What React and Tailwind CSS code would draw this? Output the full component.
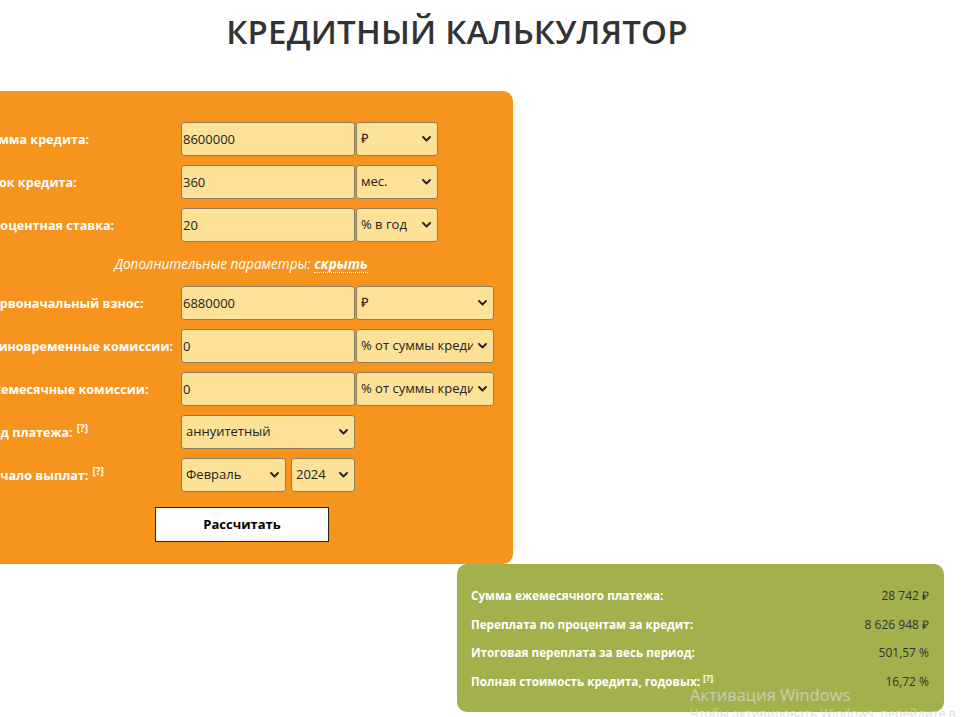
import React from 'react';

const Chevron = () => (
  <svg className="pointer-events-none absolute right-[7px] top-1/2 -translate-y-1/2" width="9" height="6" viewBox="0 0 9 6" fill="none">
    <path d="M1 1l3.5 3.5L8 1" stroke="#222" strokeWidth="1.8" strokeLinecap="round" strokeLinejoin="round" />
  </svg>
);

const Select = ({ value, options, width }) => (
  <div className={`relative h-[34px] ${width}`}>
    <select
      defaultValue={value}
      className="h-full w-full appearance-none rounded-[3px] border border-[#8d7f5e] bg-[#fde197] pl-[4px] pr-[20px] text-[13px] text-[#222] outline-none"
    >
      {options.map((o) => (
        <option key={o}>{o}</option>
      ))}
    </select>
    <Chevron />
  </div>
);

const Input = ({ value }) => (
  <input
    defaultValue={value}
    className="h-[34px] w-[174px] rounded-[3px] border border-[#8d7f5e] bg-[#fde197] px-[1px] text-[13px] text-[#222] outline-none"
  />
);

const Hint = () => <sup className="ml-[4px] text-[10px] font-bold">[?]</sup>;

const Row = ({ label, children }) => (
  <div className="flex h-[34px] items-center">
    <div className="w-[198px] whitespace-nowrap pt-[2px] text-[12.6px] font-bold text-white">{label}</div>
    <div className="flex gap-[1px]">{children}</div>
  </div>
);

const results = [
  ['Сумма ежемесячного платежа:', '28 742 ₽', false],
  ['Переплата по процентам за кредит:', '8 626 948 ₽', false],
  ['Итоговая переплата за весь период:', '501,57 %', false],
  ['Полная стоимость кредита, годовых:', '16,72 %', true],
];

export default function App() {
  return (
    <div className="relative h-[717px] w-[975px] overflow-hidden bg-white font-['Open_Sans',sans-serif]">
      <h1 className="flex h-[91px] w-[914px] items-center justify-center pb-[27px] text-[33px] font-semibold tracking-[0.2px] text-[#333]">
        КРЕДИТНЫЙ КАЛЬКУЛЯТОР
      </h1>

      <div className="ml-[-37px] flex w-[550px] flex-col gap-[9px] rounded-[10px] bg-[#f7941d] pb-[22px] pl-[20px] pt-[31px]">
        <Row label="Сумма кредита:">
          <Input value="8600000" />
          <Select value="₽" options={['₽', '$', '€']} width="w-[82px]" />
        </Row>
        <Row label="Срок кредита:">
          <Input value="360" />
          <Select value="мес." options={['мес.', 'лет']} width="w-[82px]" />
        </Row>
        <Row label="Процентная ставка:">
          <Input value="20" />
          <Select value="% в год" options={['% в год', '% в месяц']} width="w-[82px]" />
        </Row>

        <div className="flex h-[26px] w-[516px] items-center justify-center text-[13.6px] italic text-white">
          Дополнительные параметры:&nbsp;
          <span className="border-b border-dotted border-white font-bold leading-[16px]">скрыть</span>
        </div>

        <Row label="Первоначальный взнос:">
          <Input value="6880000" />
          <Select value="₽" options={['₽', '% от суммы кредита']} width="w-[138px]" />
        </Row>
        <Row label="Единовременные комиссии:">
          <Input value="0" />
          <Select value="% от суммы кредита" options={['% от суммы кредита', '₽']} width="w-[138px]" />
        </Row>
        <Row label="Ежемесячные комиссии:">
          <Input value="0" />
          <Select value="% от суммы кредита" options={['% от суммы кредита', '₽']} width="w-[138px]" />
        </Row>
        <Row
          label={
            <span>
              Вид платежа:
              <Hint />
            </span>
          }
        >
          <Select value="аннуитетный" options={['аннуитетный', 'дифференцированный']} width="w-[174px]" />
        </Row>
        <Row
          label={
            <span>
              Начало выплат:
              <Hint />
            </span>
          }
        >
          <div className="flex gap-[5px]">
            <Select value="Февраль" options={['Январь', 'Февраль', 'Март']} width="w-[105px]" />
            <Select value="2024" options={['2023', '2024', '2025']} width="w-[64px]" />
          </div>
        </Row>

        <div className="mt-[6px] pl-[172px]">
          <button className="h-[35px] w-[174px] border border-[#222] bg-white text-[13px] font-bold text-black">
            Рассчитать
          </button>
        </div>
      </div>

      <div className="ml-[457px] w-[487px] rounded-[10px] bg-[#a3b04c] pb-[16px] pl-[14px] pr-[15px] pt-[18px]">
        {results.map(([label, value, hint]) => (
          <div key={label} className="flex h-[28.5px] items-center justify-between text-[11.7px]">
            <span className="font-bold text-white">
              {label}
              {hint && <sup className="ml-[3px] text-[9px] font-bold">[?]</sup>}
            </span>
            <span className="text-[12px] text-[#333]">{value}</span>
          </div>
        ))}
      </div>

      <div className="pointer-events-none absolute left-[690px] top-[685px] text-[#d6d6d6]/80">
        <div className="text-[16.5px] leading-[20px]">Активация Windows</div>
        <div className="text-[12.5px] leading-[18px]">Чтобы активировать Windows, перейдите в</div>
      </div>
    </div>
  );
}
